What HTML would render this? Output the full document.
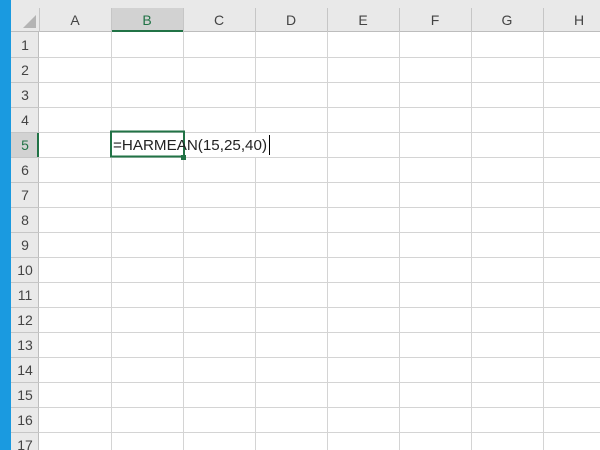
<!DOCTYPE html><html><head><style>
body{margin:0;width:600px;height:450px;overflow:hidden;background:#fff;font-family:"Liberation Sans",sans-serif;position:relative}
.abs{position:absolute}
</style></head><body>
<div class="abs" style="left:0;top:0;width:11px;height:450px;background:#1a9ae0"></div>
<div class="abs" style="left:11px;top:0;width:589px;height:32px;background:#e9e9e9;border-bottom:1px solid #bdbdbd;box-sizing:border-box"></div>
<div class="abs" style="left:11px;top:32px;width:28px;height:418px;background:#e9e9e9;border-right:1px solid #bdbdbd;box-sizing:border-box"></div>
<svg class="abs" style="left:0;top:0" width="600" height="450">
<polygon points="23,28 36,28 36,15" fill="#b4b4b4"/>
<rect x="111" y="8" width="72" height="24" fill="#d2d2d2"/>
<rect x="111" y="30" width="72" height="2" fill="#217346"/>
<rect x="11" y="132" width="28" height="25" fill="#d2d2d2"/>
<rect x="37" y="132" width="2" height="25" fill="#217346"/>
<g stroke="#d4d4d4" stroke-width="1">
<line x1="39" y1="57.5" x2="600" y2="57.5"/><line x1="39" y1="82.5" x2="600" y2="82.5"/><line x1="39" y1="107.5" x2="600" y2="107.5"/><line x1="39" y1="132.5" x2="600" y2="132.5"/><line x1="39" y1="157.5" x2="600" y2="157.5"/><line x1="39" y1="182.5" x2="600" y2="182.5"/><line x1="39" y1="207.5" x2="600" y2="207.5"/><line x1="39" y1="232.5" x2="600" y2="232.5"/><line x1="39" y1="257.5" x2="600" y2="257.5"/><line x1="39" y1="282.5" x2="600" y2="282.5"/><line x1="39" y1="307.5" x2="600" y2="307.5"/><line x1="39" y1="332.5" x2="600" y2="332.5"/><line x1="39" y1="357.5" x2="600" y2="357.5"/><line x1="39" y1="382.5" x2="600" y2="382.5"/><line x1="39" y1="407.5" x2="600" y2="407.5"/><line x1="39" y1="432.5" x2="600" y2="432.5"/>
<line x1="111.5" y1="32" x2="111.5" y2="450"/><line x1="183.5" y1="32" x2="183.5" y2="450"/><line x1="255.5" y1="32" x2="255.5" y2="450"/><line x1="327.5" y1="32" x2="327.5" y2="450"/><line x1="399.5" y1="32" x2="399.5" y2="450"/><line x1="471.5" y1="32" x2="471.5" y2="450"/><line x1="543.5" y1="32" x2="543.5" y2="450"/>
</g>
<g stroke="#c6c6c6" stroke-width="1">
<line x1="11" y1="57.5" x2="39" y2="57.5"/><line x1="11" y1="82.5" x2="39" y2="82.5"/><line x1="11" y1="107.5" x2="39" y2="107.5"/><line x1="11" y1="132.5" x2="39" y2="132.5"/><line x1="11" y1="157.5" x2="39" y2="157.5"/><line x1="11" y1="182.5" x2="39" y2="182.5"/><line x1="11" y1="207.5" x2="39" y2="207.5"/><line x1="11" y1="232.5" x2="39" y2="232.5"/><line x1="11" y1="257.5" x2="39" y2="257.5"/><line x1="11" y1="282.5" x2="39" y2="282.5"/><line x1="11" y1="307.5" x2="39" y2="307.5"/><line x1="11" y1="332.5" x2="39" y2="332.5"/><line x1="11" y1="357.5" x2="39" y2="357.5"/><line x1="11" y1="382.5" x2="39" y2="382.5"/><line x1="11" y1="407.5" x2="39" y2="407.5"/><line x1="11" y1="432.5" x2="39" y2="432.5"/>
<line x1="111.5" y1="8" x2="111.5" y2="32"/><line x1="183.5" y1="8" x2="183.5" y2="32"/><line x1="255.5" y1="8" x2="255.5" y2="32"/><line x1="327.5" y1="8" x2="327.5" y2="32"/><line x1="399.5" y1="8" x2="399.5" y2="32"/><line x1="471.5" y1="8" x2="471.5" y2="32"/><line x1="543.5" y1="8" x2="543.5" y2="32"/><line x1="39.5" y1="8" x2="39.5" y2="32"/>
</g>
<g font-family="Liberation Sans" font-size="14" fill="#444" text-anchor="middle">
<text x="75" y="25">A</text><text x="147" y="25" fill="#217346">B</text><text x="219" y="25">C</text><text x="291" y="25">D</text><text x="363" y="25">E</text><text x="435" y="25">F</text><text x="507" y="25">G</text><text x="579" y="25">H</text>
<text x="25" y="50">1</text><text x="25" y="75">2</text><text x="25" y="100">3</text><text x="25" y="125">4</text><text x="25" y="150" fill="#217346">5</text><text x="25" y="175">6</text><text x="25" y="200">7</text><text x="25" y="225">8</text><text x="25" y="250">9</text><text x="25" y="275">10</text><text x="25" y="300">11</text><text x="25" y="325">12</text><text x="25" y="350">13</text><text x="25" y="375">14</text><text x="25" y="400">15</text><text x="25" y="425">16</text><text x="25" y="450">17</text>
</g>
<rect x="112" y="133" width="160" height="24" fill="#fff"/>
<rect x="111" y="131.5" width="73" height="25" fill="none" stroke="#217346" stroke-width="2"/>
<rect x="181" y="155" width="5" height="5" fill="#217346"/>
<text x="113" y="150" font-family="Liberation Sans" font-size="14.5" fill="#222" textLength="154" lengthAdjust="spacingAndGlyphs">=HARMEAN(15,25,40)</text>
<line x1="269.5" y1="135" x2="269.5" y2="155" stroke="#000" stroke-width="1"/>
</svg>
</body></html>
